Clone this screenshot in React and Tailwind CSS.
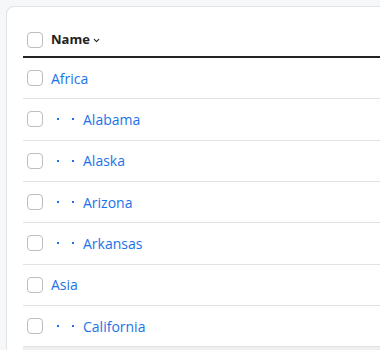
import { ChevronDown } from 'lucide-react';

const rows = [
  { name: 'Africa', depth: 0 },
  { name: 'Alabama', depth: 2 },
  { name: 'Alaska', depth: 2 },
  { name: 'Arizona', depth: 2 },
  { name: 'Arkansas', depth: 2 },
  { name: 'Asia', depth: 0 },
  { name: 'California', depth: 2 },
];

const Checkbox = () => (
  <span className="w-4 h-4 rounded-[4px] border border-[#bdbdbd] bg-white shrink-0" />
);

export default function App() {
  return (
    <div className="h-[350px] overflow-hidden bg-[#f6f7f9] pt-[6px] pl-[6px] font-['Open_Sans',sans-serif]">
      <div className="bg-white border border-r-0 border-[#e2e3e6] rounded-tl-lg pl-4 pt-[18px]">
        {/* header */}
        <div className="h-[33px] flex items-center pl-1 border-b-2 border-[#222] pb-[2px]">
          <Checkbox />
          <span className="ml-2 text-[13px] font-bold text-[#222]">Name</span>
          <ChevronDown size={9} strokeWidth={3} className="ml-[2px] mt-[1px] text-[#222]" />
        </div>

        {rows.map((r) => (
          <div key={r.name} className="h-[41.33px] flex items-center pl-1 border-b border-[#e1e1e6]">
            <Checkbox />
            <div className="ml-2 flex items-center text-[14px] text-[#1a73e8]">
              {r.depth > 0 && (
                <span className="flex items-center gap-[13px] pl-[6px] pr-[9px]">
                  <span className="w-[2px] h-[2px] bg-[#1a73e8]" />
                  <span className="w-[2px] h-[2px] bg-[#1a73e8]" />
                </span>
              )}
              <span>{r.name}</span>
            </div>
          </div>
        ))}
        <div className="h-10 bg-[#efefef]" />
      </div>
    </div>
  );
}
